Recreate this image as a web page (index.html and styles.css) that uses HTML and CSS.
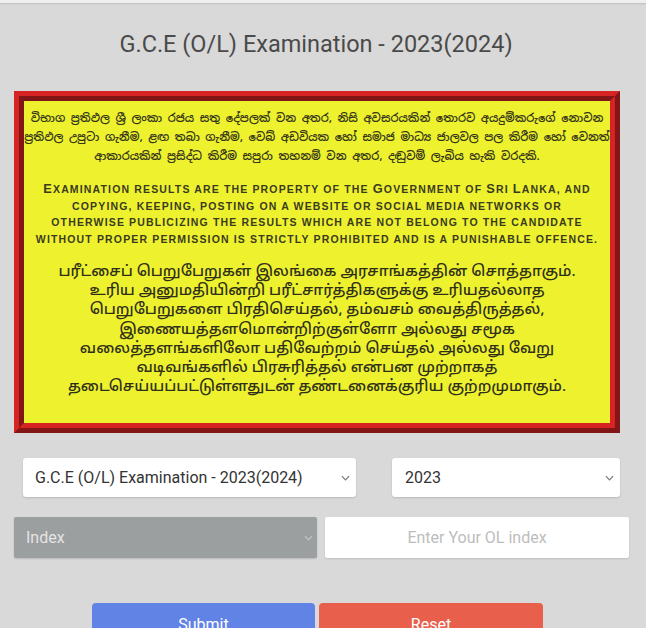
FILE: index.html
```html
<!DOCTYPE html>
<html>
<head>
<meta charset="utf-8">
<link rel="stylesheet" href="styles.css">
</head>
<body>
<div class="topbar"></div>
<main class="page">
  <h1 class="title">G.C.E (O/L) Examination - 2023(2024)</h1>
  <section class="notice">
    <p class="si">විභාග ප්‍රතිඵල ශ්‍රී ලංකා රජය සතු දේපලක් වන අතර, නිසි අවසරයකින් තොරව අයදුම්කරුගේ නොවන<br>ප්‍රතිඵල උපුටා ගැනීම, ළඟ තබා ගැනීම, වෙබ් අඩවියක හෝ සමාජ මාධ්‍ය ජාලවල පල කිරීම හෝ වෙනත්<br>ආකාරයකින් ප්‍රසිද්ධ කිරීම සපුරා තහනම් වන අතර, දඬුවම් ලැබිය හැකි වරදකි.</p>
    <p class="en"><span class="cap">E</span>xamination results are the property of the <span class="cap">G</span>overnment of <span class="cap">S</span>ri <span class="cap">L</span>anka, and<br>copying, keeping, posting on a website or social media networks or<br>otherwise publicizing the results which are not belong to the candidate<br>without proper permission is strictly prohibited and is a punishable offence.</p>
    <p class="ta">பரீட்சைப் பெறுபேறுகள் இலங்கை அரசாங்கத்தின் சொத்தாகும்.<br>உரிய அனுமதியின்றி பரீட்சார்த்திகளுக்கு உரியதல்லாத<br>பெறுபேறுகளை பிரதிசெய்தல், தம்வசம் வைத்திருத்தல்,<br>இணையத்தளமொன்றிற்குள்ளோ அல்லது சமூக<br>வலைத்தளங்களிலோ பதிவேற்றம் செய்தல் அல்லது வேறு<br>வடிவங்களில் பிரசுரித்தல் என்பன முற்றாகத்<br>தடைசெய்யப்பட்டுள்ளதுடன் தண்டனைக்குரிய குற்றமுமாகும்.</p>
  </section>
  <div class="row row1">
    <div class="select sel-exam"><span>G.C.E (O/L) Examination - 2023(2024)</span><svg class="chev" viewBox="0 0 10 6" width="9" height="6"><path d="M1 1l4 4 4-4" fill="none" stroke="#777" stroke-width="1.3"/></svg></div>
    <div class="select sel-year"><span>2023</span><svg class="chev" viewBox="0 0 10 6" width="9" height="6"><path d="M1 1l4 4 4-4" fill="none" stroke="#777" stroke-width="1.3"/></svg></div>
  </div>
  <div class="row row2">
    <div class="select sel-index"><span>Index</span><svg class="chev" viewBox="0 0 10 6" width="9" height="6"><path d="M1 1l4 4 4-4" fill="none" stroke="#c4c6c6" stroke-width="1.3"/></svg></div>
    <input class="index-input" type="text" placeholder="Enter Your OL index">
  </div>
  <div class="row buttons">
    <button class="btn btn-submit">Submit</button>
    <button class="btn btn-reset">Reset</button>
  </div>
</main>
</body>
</html>
```

FILE: styles.css
```css
html, body {
  margin: 0;
  padding: 0;
}
body {
  background: #d9d9d9;
  font-family: Roboto, "Liberation Sans", sans-serif;
  overflow: hidden;
}
.topbar {
  height: 3px;
  background: #efefef;
  box-shadow: 0 1px 2px rgba(0,0,0,0.12);
}
.page {
  display: flex;
  flex-direction: column;
}
.title {
  margin: 26px 0 0 0;
  height: 30px;
  line-height: 30px;
  text-align: center;
  font-size: 23.5px;
  font-weight: 400;
  color: #4a4a4a;
  padding-right: 14px;
}
.notice {
  margin: 32px 26px 0 14px;
  height: 342px;
  box-sizing: border-box;
  border: 10px ridge #d62424;
  background: #eef22e;
  color: #36361a;
  text-align: center;
  padding-top: 8px;
  overflow: hidden;
}
.notice p {
  margin: 0;
  white-space: nowrap;
}
.si {
  font-family: "Noto Sans Sinhala", "Noto Serif Sinhala", "Liberation Sans", sans-serif;
  font-size: 11.2px;
  line-height: 19px;
  font-weight: 600;
}
.en {
  margin-top: 15px !important;
  font-family: "Liberation Sans", Arial, sans-serif;
  text-transform: uppercase;
  font-weight: 700;
  font-size: 10.5px;
  letter-spacing: 1.15px;
  line-height: 16.5px;
  color: #3b3b20;
}
.en .cap {
  font-size: 12.8px;
}
.ta {
  margin-top: 16px !important;
  font-family: "Noto Sans Tamil", "Liberation Sans", sans-serif;
  font-size: 15.2px;
  line-height: 19.2px;
  font-weight: 500;
  color: #30301a;
}
.row {
  display: flex;
}
.row1 {
  margin-top: 25px;
  padding-left: 23px;
  gap: 36px;
}
.select {
  display: flex;
  align-items: center;
  justify-content: space-between;
  box-sizing: border-box;
  background: #fff;
  border-radius: 3px;
  box-shadow: 0 1px 2px rgba(0,0,0,0.15);
  font-size: 16px;
  color: #333;
}
.sel-exam {
  width: 333px;
  height: 39px;
  padding: 0 6px 0 12px;
}
.sel-year {
  width: 228px;
  height: 39px;
  padding: 0 6px 0 13px;
}
.row2 {
  margin-top: 20px;
  padding-left: 14px;
  gap: 8px;
}
.sel-index {
  width: 303px;
  height: 41px;
  padding: 0 4px 0 12px;
  background: #9c9f9f;
  color: #e4e4e4;
  border-radius: 2px;
}
.index-input {
  width: 304px;
  height: 41px;
  box-sizing: border-box;
  border: none;
  border-radius: 2px;
  background: #fff;
  box-shadow: 0 1px 2px rgba(0,0,0,0.12);
  text-align: center;
  font-family: Roboto, "Liberation Sans", sans-serif;
  font-size: 16px;
  outline: none;
}
.index-input::placeholder {
  color: #bdbdbd;
}
.buttons {
  margin-top: 45px;
  padding-left: 92px;
  gap: 4px;
}
.btn {
  width: 223px;
  height: 40px;
  border: none;
  border-radius: 4px;
  color: #fff;
  font-family: Roboto, "Liberation Sans", sans-serif;
  font-size: 16px;
  padding: 0;
  padding-top: 2px;
}
.btn-submit {
  background: #6283e6;
}
.btn-reset {
  width: 224px;
  background: #e8604b;
}
```
